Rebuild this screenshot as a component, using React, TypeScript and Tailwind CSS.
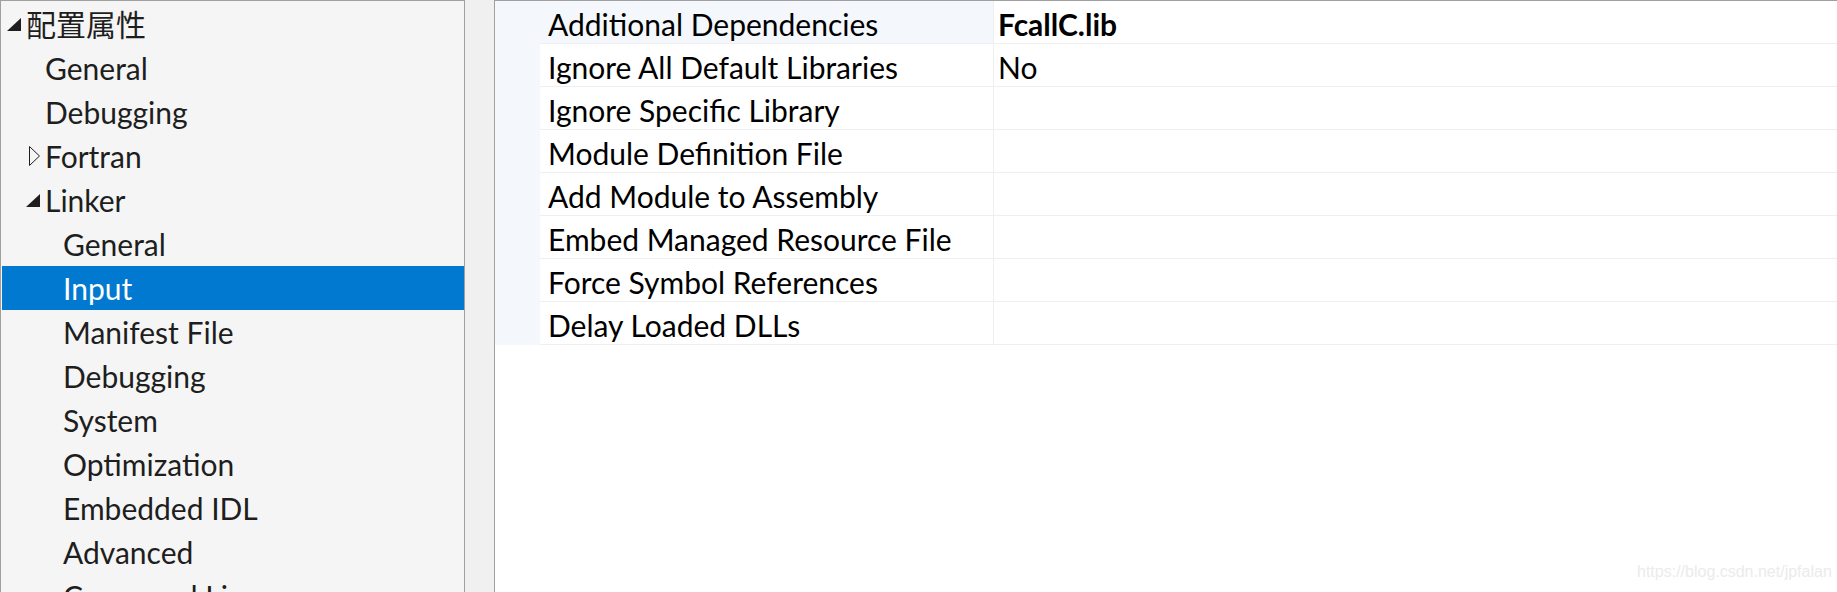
import React from "react";

const FONT = '"Lato", "Noto Sans CJK SC", sans-serif';

type TreeItem = { label: string; level: number; arrow?: "open" | "closed"; selected?: boolean };

const tree: TreeItem[] = [
  { label: "配置属性", level: 0, arrow: "open" },
  { label: "General", level: 1 },
  { label: "Debugging", level: 1 },
  { label: "Fortran", level: 1, arrow: "closed" },
  { label: "Linker", level: 1, arrow: "open" },
  { label: "General", level: 2 },
  { label: "Input", level: 2, selected: true },
  { label: "Manifest File", level: 2 },
  { label: "Debugging", level: 2 },
  { label: "System", level: 2 },
  { label: "Optimization", level: 2 },
  { label: "Embedded IDL", level: 2 },
  { label: "Advanced", level: 2 },
  { label: "Command Line", level: 2 },
];

const props: { name: string; value?: string; bold?: boolean }[] = [
  { name: "Additional Dependencies", value: "FcallC.lib", bold: true },
  { name: "Ignore All Default Libraries", value: "No" },
  { name: "Ignore Specific Library" },
  { name: "Module Definition File" },
  { name: "Add Module to Assembly" },
  { name: "Embed Managed Resource File" },
  { name: "Force Symbol References" },
  { name: "Delay Loaded DLLs" },
];

function OpenArrow() {
  return (
    <svg width="14" height="13" viewBox="0 0 14 13" className="block">
      <polygon points="14,0 14,13 0,13" fill="#1e1e1e" />
    </svg>
  );
}

function ClosedArrow() {
  return (
    <svg width="11" height="20" viewBox="0 0 11 20" className="block">
      <polygon points="0.5,0.5 10.5,10 0.5,19.5" fill="none" stroke="#1e1e1e" strokeWidth="1" />
    </svg>
  );
}

function TreeRow({ item }: { item: TreeItem }) {
  const textLeft = item.level === 0 ? "pl-[24px]" : item.level === 1 ? "pl-[43px]" : "pl-[61px]";
  return (
    <div
      className={
        "relative h-[44px] flex items-center shrink-0 pb-[1px] text-[30px] leading-none " +
        textLeft +
        (item.selected ? " bg-[#0179d0] text-white" : " text-[#1e1e1e]")
      }
    >
      {item.arrow === "open" && item.level === 0 && (
        <span className="absolute left-[5px] top-[16px]">
          <OpenArrow />
        </span>
      )}
      {item.arrow === "open" && item.level === 1 && (
        <span className="absolute left-[24px] top-[16px]">
          <OpenArrow />
        </span>
      )}
      {item.arrow === "closed" && (
        <span className="absolute left-[27px] top-[12px]">
          <ClosedArrow />
        </span>
      )}
      <span className="whitespace-nowrap">{item.label}</span>
    </div>
  );
}

export default function App() {
  return (
    <div
      className="relative h-[592px] w-[1837px] overflow-hidden flex bg-[#f0f0f0]"
      style={{ fontFamily: FONT }}
    >
      <div className="w-[465px] shrink-0 h-[640px] border-l border-t border-r border-[#a0a0a0] bg-[#f5f5f5] pt-px pl-px flex flex-col">
        {tree.map((t, i) => (
          <TreeRow key={i} item={t} />
        ))}
      </div>
      <div className="w-[29px] shrink-0" />
      <div className="flex-1 border-l border-t border-[#a0a0a0] bg-white">
        <div className="flex">
          <div className="w-[45px] shrink-0 bg-[#f4f7fc] h-[344px]" />
          <div className="flex-1 flex flex-col">
            {props.map((p, i) => (
              <div key={i} className="flex h-[43px] border-b border-[#efefef] text-[30px] leading-none text-black">
                <div
                  className={
                    "w-[454px] shrink-0 border-r border-[#efefef] flex items-center pt-[4px] pl-[8px] whitespace-nowrap " +
                    (i === 0 ? "bg-[#f4f7fc]" : "")
                  }
                >
                  {p.name}
                </div>
                <div className={"flex-1 flex items-center pt-[4px] pl-[4px] whitespace-nowrap " + (p.bold ? "font-bold" : "")}>
                  {p.value ?? ""}
                </div>
              </div>
            ))}
          </div>
        </div>
      </div>
      <div
        className="absolute left-[1637px] top-[564px] text-[16px] leading-none text-[#ebebeb] whitespace-nowrap"
        style={{ fontFamily: '"Liberation Sans", Arial, sans-serif' }}
      >
        https://blog.csdn.net/jpfalan
      </div>
    </div>
  );
}
